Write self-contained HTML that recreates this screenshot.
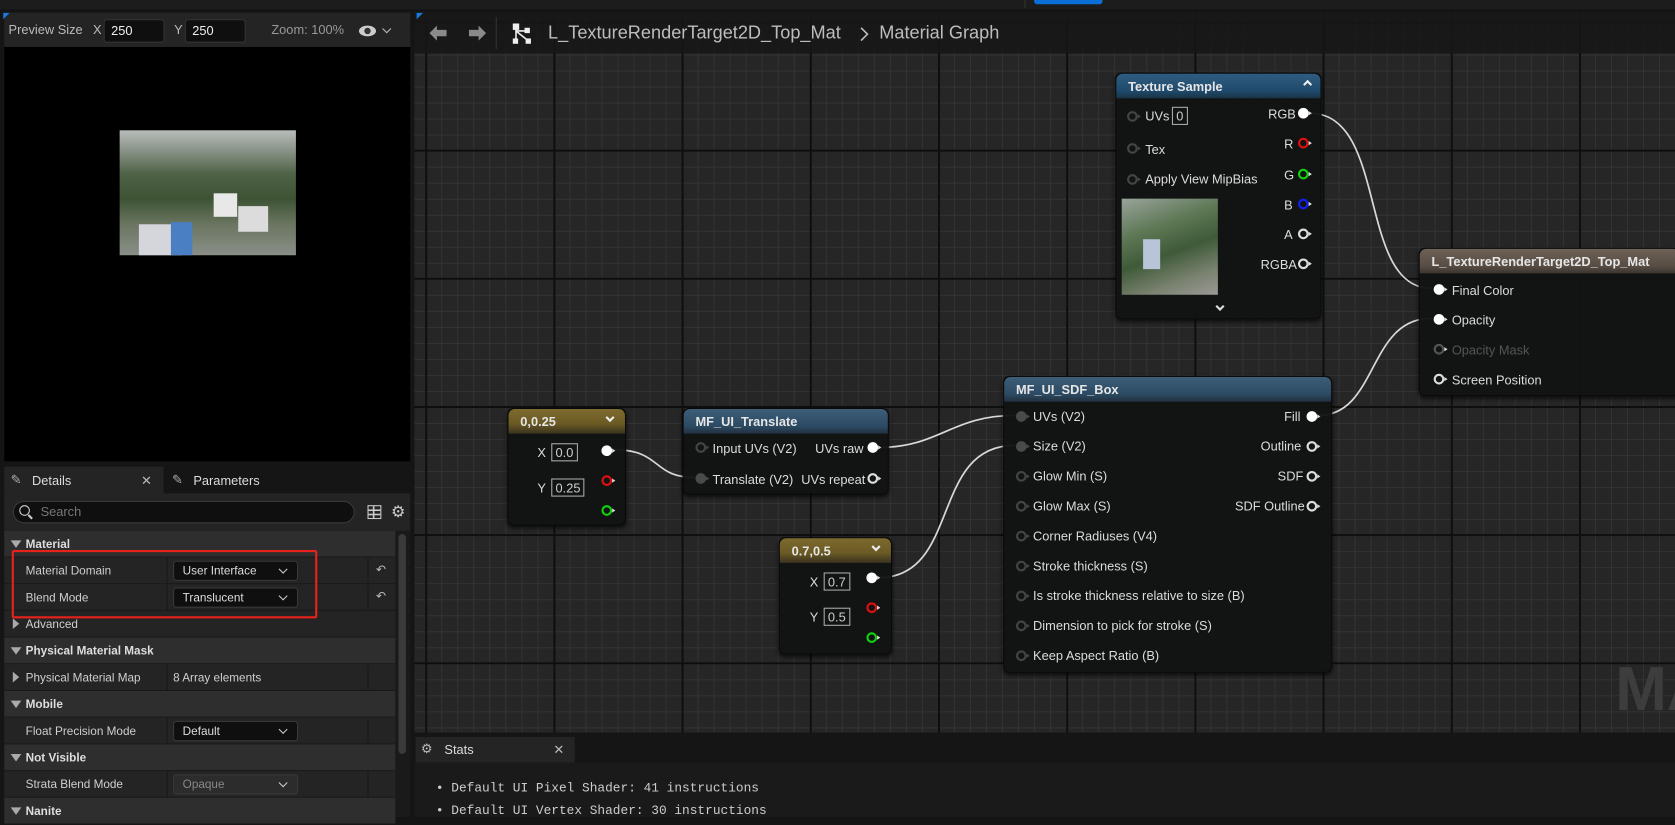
<!DOCTYPE html>
<html><head><meta charset="utf-8">
<style>
*{box-sizing:border-box;margin:0;padding:0}
html,body{width:1675px;height:817px;overflow:hidden;background:#151515}
#w{position:absolute;left:0;top:0;width:1568px;height:765px;transform:scale(1.0683,1.068);transform-origin:0 0;font-family:"Liberation Sans",sans-serif;color:#c8c8c8;font-size:12px}
.a{position:absolute}
.grid{left:388px;top:12px;width:1180px;height:674px;background-color:#262626;
background-image:
linear-gradient(90deg,#0e0e0e 2px,transparent 2px),
linear-gradient(0deg,#0e0e0e 2px,transparent 2px),
linear-gradient(90deg,#333 1px,transparent 1px),
linear-gradient(0deg,#333 1px,transparent 1px);
background-size:120px 120px,120px 120px,15px 15px,15px 15px;
background-position:10px 10px,10px 10px,10px 10px,10px 10px;overflow:hidden}
.node{position:absolute;background:rgba(18,20,19,.96);border-radius:6px;box-shadow:0 2px 4px rgba(0,0,0,.7);border:1px solid #0a0a0a}
.hd{height:23px;border-radius:6px 6px 0 0;color:#e6e6e6;font-weight:bold;font-size:12px;padding:5px 11px}
.hy{background:linear-gradient(180deg,#7d6a2e 0%,#6b5a24 60%,#3a3320 100%)}
.hb{background:linear-gradient(180deg,#3d5d78 0%,#2c4a63 70%,#223040 100%)}
.hr{background:linear-gradient(180deg,#6e6257 0%,#584d44 70%,#3b3530 100%)}
.t{position:absolute;color:#dcdcdc;font-size:12px;white-space:nowrap}
.pin{position:absolute;width:10px;height:10px;border-radius:50%;border:2px solid #ddd}
.pin:after{content:"";position:absolute;right:-5px;top:1px;width:0;height:0;border-top:2px solid transparent;border-bottom:2px solid transparent;border-left:3px solid #ddd}
.pin.f{background:#fff;border-color:#fff}
.pin.g{border-color:#444}
.pin.g:after{border-left-color:#444}
.pin.gf{background:#4a4a4a;border-color:#4a4a4a}
.pin.gf:after{border-left-color:#4a4a4a}
.box{position:absolute;border:1px solid #aaa;color:#ccc;font-size:12px;padding:1px 3px;height:17px;line-height:14px}
.row{position:absolute;left:4px;width:366px;height:25px;border-bottom:1px solid #1a1a1a}
.cat{background:#2e2e2e;color:#dedede;font-weight:bold;font-size:11px}
.prop{background:#242424;font-size:11px;color:#cfcfcf}
.dd{position:absolute;left:158px;top:3px;width:117px;height:19px;background:#0f0f0f;border-radius:3px;border:1px solid #383838;color:#ddd;font-size:11px;padding:3px 8px}
.dd:after{content:"";position:absolute;right:10px;top:4px;width:5px;height:5px;border-right:1.5px solid #ccc;border-bottom:1.5px solid #ccc;transform:rotate(45deg)}
.tri{position:absolute;left:6px;top:9px;width:0;height:0;border-left:5px solid transparent;border-right:5px solid transparent;border-top:7px solid #aaa}
.trr{position:absolute;left:8px;top:7px;width:0;height:0;border-top:5px solid transparent;border-bottom:5px solid transparent;border-left:6px solid #aaa}
</style></head><body><div id="w">
<div class="a" style="left:0;top:0;width:1568px;height:10px;background:#1c1c1c;border-bottom:1px solid #101010"></div>
<div class="a" style="left:968px;top:0;width:64px;height:4px;background:#0b6fd8;border-radius:0 0 3px 3px"></div>
<div class="a" style="left:959px;top:0;width:1px;height:8px;background:#333"></div>

<div class="a" style="left:0;top:10px;width:387px;height:755px;background:#151515"></div>
<div class="a" style="left:4px;top:12px;width:380px;height:32px;background:#242424"></div>
<div class="a" style="left:3px;top:12px;width:0;height:0;border-top:6px solid #1a7ae0;border-right:6px solid transparent"></div>
<div class="t" style="left:8px;top:21px;color:#bbb">Preview Size</div>
<div class="t" style="left:87px;top:21px;color:#bbb">X</div>
<div class="a" style="left:97px;top:18px;width:57px;height:22px;background:#0f0f0f;border:1px solid #333;border-radius:3px;color:#eee;padding:3px 6px">250</div>
<div class="t" style="left:163px;top:21px;color:#bbb">Y</div>
<div class="a" style="left:173px;top:18px;width:57px;height:22px;background:#0f0f0f;border:1px solid #333;border-radius:3px;color:#eee;padding:3px 6px">250</div>
<div class="t" style="left:254px;top:21px;color:#999">Zoom: 100%</div>
<div class="a" style="left:336px;top:24px;width:16px;height:10px;border-radius:50%;background:#ccc"></div>
<div class="a" style="left:341px;top:26px;width:6px;height:6px;border-radius:50%;background:#333"></div>
<div class="a" style="left:359px;top:24px;width:6px;height:6px;border-right:1.5px solid #bbb;border-bottom:1.5px solid #bbb;transform:rotate(45deg)"></div>
<div class="a" style="left:4px;top:44px;width:380px;height:388px;background:#000"></div>
<div class="a" style="left:112px;top:122px;width:165px;height:117px;background:linear-gradient(180deg,#b8bcb9 0%,#8d968c 15%,#4e6245 35%,#3d5334 55%,#6a7560 75%,#8a8f88 100%)"></div>
<div class="a" style="left:200px;top:181px;width:22px;height:22px;background:#e8e8e8"></div>
<div class="a" style="left:223px;top:193px;width:28px;height:24px;background:#dcdcdc"></div>
<div class="a" style="left:130px;top:210px;width:40px;height:29px;background:#d5d5dc"></div>
<div class="a" style="left:160px;top:208px;width:20px;height:31px;background:#4a7fc4"></div>

<div class="a" style="left:4px;top:437px;width:149px;height:25px;background:#242424"></div>
<div class="t" style="left:10px;top:442px;color:#aaa">✎</div>
<div class="t" style="left:30px;top:443px">Details</div>
<div class="t" style="left:132px;top:443px;color:#bbb">✕</div>
<div class="t" style="left:161px;top:442px;color:#aaa">✎</div>
<div class="t" style="left:181px;top:443px">Parameters</div>
<div class="a" style="left:4px;top:462px;width:380px;height:35px;background:#242424"></div>
<div class="a" style="left:12px;top:469px;width:320px;height:21px;background:#0f0f0f;border:1px solid #383838;border-radius:11px"></div>
<div class="a" style="left:18px;top:473px;width:10px;height:10px;border:1.5px solid #ccc;border-radius:50%"></div>
<div class="a" style="left:26px;top:483px;width:5px;height:1.5px;background:#ccc;transform:rotate(45deg)"></div>
<div class="t" style="left:38px;top:472px;color:#777">Search</div>
<div class="a" style="left:344px;top:473px;width:13px;height:13px;border:1.5px solid #ccc;background:linear-gradient(#ccc,#ccc) 0 3px/100% 1.5px no-repeat,linear-gradient(#ccc,#ccc) 0 7px/100% 1.5px no-repeat,linear-gradient(#ccc,#ccc) 4px 0/1.5px 100% no-repeat"></div>
<div class="t" style="left:366px;top:470px;color:#ccc;font-size:15px">⚙</div>
<div class="a" style="left:4px;top:497px;width:380px;height:268px;background:#1a1a1a"></div>

<div class="row cat" style="top:497px"><div class="tri"></div><span class="a" style="left:20px;top:7px">Material</span></div>
<div class="row prop" style="top:522px"><span class="a" style="left:20px;top:7px">Material Domain</span><div class="a" style="left:152px;top:0;width:1px;height:25px;background:#1a1a1a"></div><div class="dd">User Interface</div><div class="a" style="left:340px;top:0;width:1px;height:25px;background:#1a1a1a"></div><span class="a" style="left:348px;top:5px;color:#bbb">↶</span></div>
<div class="row prop" style="top:547px"><span class="a" style="left:20px;top:7px">Blend Mode</span><div class="a" style="left:152px;top:0;width:1px;height:25px;background:#1a1a1a"></div><div class="dd">Translucent</div><div class="a" style="left:340px;top:0;width:1px;height:25px;background:#1a1a1a"></div><span class="a" style="left:348px;top:5px;color:#bbb">↶</span></div>
<div class="row prop" style="top:572px"><div class="trr"></div><span class="a" style="left:20px;top:7px">Advanced</span></div>
<div class="row cat" style="top:597px"><div class="tri"></div><span class="a" style="left:20px;top:7px">Physical Material Mask</span></div>
<div class="row prop" style="top:622px"><div class="trr"></div><span class="a" style="left:20px;top:7px">Physical Material Map</span><div class="a" style="left:152px;top:0;width:1px;height:25px;background:#1a1a1a"></div><span class="a" style="left:158px;top:7px">8 Array elements</span><div class="a" style="left:340px;top:0;width:1px;height:25px;background:#1a1a1a"></div></div>
<div class="row cat" style="top:647px"><div class="tri"></div><span class="a" style="left:20px;top:7px">Mobile</span></div>
<div class="row prop" style="top:672px"><span class="a" style="left:20px;top:7px">Float Precision Mode</span><div class="a" style="left:152px;top:0;width:1px;height:25px;background:#1a1a1a"></div><div class="dd">Default</div><div class="a" style="left:340px;top:0;width:1px;height:25px;background:#1a1a1a"></div></div>
<div class="row cat" style="top:697px"><div class="tri"></div><span class="a" style="left:20px;top:7px">Not Visible</span></div>
<div class="row prop" style="top:722px"><span class="a" style="left:20px;top:7px">Strata Blend Mode</span><div class="a" style="left:152px;top:0;width:1px;height:25px;background:#1a1a1a"></div><div class="dd" style="background:#2c2c2c;color:#888">Opaque</div><div class="a" style="left:340px;top:0;width:1px;height:25px;background:#1a1a1a"></div></div>
<div class="row cat" style="top:747px"><div class="tri"></div><span class="a" style="left:20px;top:7px">Nanite</span></div>
<div class="a" style="left:373px;top:500px;width:7px;height:206px;background:#3a3a3a;border-radius:4px"></div>
<div class="a" style="left:11px;top:515px;width:286px;height:64px;border:2px solid #e8221b;border-radius:2px"></div>

<div class="a grid">
<div class="a" style="left:1124px;top:600px;font-size:58px;font-weight:bold;color:#3d3d3d">MA</div>
</div>
<div class="a" style="left:388px;top:12px;width:1180px;height:38px;background:rgba(22,22,22,.85)"></div>
<div class="a" style="left:390px;top:12px;width:0;height:0;border-top:6px solid #1a7ae0;border-right:6px solid transparent"></div>
<svg class="a" style="left:400px;top:22px" width="60" height="18" viewBox="0 0 60 18">
<path d="M2 9L9 2V6H18V12H9V16Z" fill="#8a8a8a"/>
<path d="M55 9L48 2V6H39V12H48V16Z" fill="#8a8a8a"/>
</svg>
<div class="a" style="left:464px;top:16px;width:1px;height:30px;background:#333"></div>
<svg class="a" style="left:478px;top:21px" width="22" height="22" viewBox="0 0 22 22"><rect x="2" y="1" width="6" height="6" fill="#eee"/><rect x="13" y="5" width="5" height="5" fill="#eee"/><rect x="2" y="15" width="5" height="5" fill="#eee"/><rect x="14" y="15" width="5" height="5" fill="#eee"/><path d="M5 6V16M5 8H14M5 8L15 16" stroke="#eee" stroke-width="1.5" fill="none"/></svg>
<div class="t" style="left:513px;top:21px;font-size:17px;color:#bdbdbd">L_TextureRenderTarget2D_Top_Mat</div>
<svg class="a" style="left:804px;top:24px" width="10" height="16"><path d="M2 2L8 8L2 14" stroke="#bdbdbd" stroke-width="1.5" fill="none"/></svg>
<div class="t" style="left:823px;top:21px;font-size:17px;color:#bdbdbd">Material Graph</div>

<svg class="a" style="left:0;top:0" width="1568" height="765">
<g stroke="#d8d8d8" stroke-width="1.6" fill="none">
<path d="M1226 106 C1300 106,1270 270,1340 270"/>
<path d="M1234 389 C1290 389,1280 298,1340 298"/>
<path d="M822 419 C880 419,890 389,950 389"/>
<path d="M574 421 C620 421,610 447,650 447"/>
<path d="M822 541 C900 541,870 417,950 417"/>
</g></svg>

<div class="node" style="left:475px;top:382px;width:111px;height:110px">
<div class="hd hy">0,0.25</div>
<div class="a" style="left:92px;top:5px;width:6px;height:6px;border-right:2px solid #eee;border-bottom:2px solid #eee;transform:rotate(45deg)"></div>
<span class="t" style="left:27px;top:34px">X</span><div class="box" style="left:40px;top:32px">0.0</div>
<span class="t" style="left:27px;top:67px">Y</span><div class="box" style="left:40px;top:65px">0.25</div>
<div class="pin f" style="left:87px;top:34px"></div>
<div class="pin" style="left:87px;top:62px;border-color:#e01010"></div>
<div class="pin" style="left:87px;top:90px;border-color:#10d010"></div>
</div>
<div class="node" style="left:639px;top:382px;width:193px;height:81px">
<div class="hd hb">MF_UI_Translate</div>
<div class="pin g" style="left:11px;top:31px"></div><span class="t" style="left:27px;top:30px">Input UVs (V2)</span>
<div class="pin gf" style="left:11px;top:60px"></div><span class="t" style="left:27px;top:59px">Translate (V2)</span>
<span class="t" style="left:123px;top:30px">UVs raw</span><div class="pin f" style="left:172px;top:31px"></div>
<span class="t" style="left:110px;top:59px">UVs repeat</span><div class="pin" style="left:172px;top:60px"></div>
</div>
<div class="node" style="left:729px;top:503px;width:106px;height:110px">
<div class="hd hy">0.7,0.5</div>
<div class="a" style="left:87px;top:5px;width:6px;height:6px;border-right:2px solid #eee;border-bottom:2px solid #eee;transform:rotate(45deg)"></div>
<span class="t" style="left:28px;top:34px">X</span><div class="box" style="left:41px;top:32px">0.7</div>
<span class="t" style="left:28px;top:67px">Y</span><div class="box" style="left:41px;top:65px">0.5</div>
<div class="pin f" style="left:81px;top:32px"></div>
<div class="pin" style="left:81px;top:60px;border-color:#e01010"></div>
<div class="pin" style="left:81px;top:88px;border-color:#10d010"></div>
</div>
<div class="node" style="left:1044px;top:68px;width:193px;height:231px">
<div class="hd hb" style="background:linear-gradient(180deg,#2f5c80 0%,#1f4a6c 70%,#1a3345 100%)">Texture Sample</div>
<div class="a" style="left:176px;top:7px;width:6px;height:6px;border-left:2px solid #eee;border-top:2px solid #eee;transform:rotate(45deg)"></div>
<div class="pin g" style="left:10px;top:35px"></div><span class="t" style="left:27px;top:33px">UVs</span><div class="box" style="left:52px;top:31px">0</div>
<div class="pin g" style="left:10px;top:65px"></div><span class="t" style="left:27px;top:64px">Tex</span>
<div class="pin g" style="left:10px;top:94px"></div><span class="t" style="left:27px;top:92px">Apply View MipBias</span>
<div class="a" style="left:5px;top:117px;width:90px;height:90px;background:linear-gradient(160deg,#9aa39c 0%,#607a58 30%,#3f5a38 55%,#7a8270 80%,#9a9a96 100%)"></div>
<div class="a" style="left:25px;top:155px;width:16px;height:28px;background:#b8c4d8"></div>
<span class="t" style="left:142px;top:31px">RGB</span><div class="pin f" style="left:170px;top:32px"></div>
<span class="t" style="left:157px;top:59px">R</span><div class="pin" style="left:170px;top:60px;border-color:#e01010"></div>
<span class="t" style="left:157px;top:88px">G</span><div class="pin" style="left:170px;top:89px;border-color:#10d010"></div>
<span class="t" style="left:157px;top:116px">B</span><div class="pin" style="left:170px;top:117px;border-color:#1020f0"></div>
<span class="t" style="left:157px;top:144px">A</span><div class="pin" style="left:170px;top:145px"></div>
<span class="t" style="left:135px;top:172px">RGBA</span><div class="pin" style="left:170px;top:173px"></div>
<div class="a" style="left:94px;top:215px;width:6px;height:6px;border-right:2px solid #ddd;border-bottom:2px solid #ddd;transform:rotate(45deg)"></div>
</div>
<div class="node" style="left:1328px;top:232px;width:245px;height:139px">
<div class="hd hr">L_TextureRenderTarget2D_Top_Mat</div>
<div class="pin f" style="left:13px;top:33px"></div><span class="t" style="left:30px;top:32px">Final Color</span>
<div class="pin f" style="left:13px;top:61px"></div><span class="t" style="left:30px;top:60px">Opacity</span>
<div class="pin" style="left:13px;top:89px;border-color:#555"></div><span class="t" style="left:30px;top:88px;color:#555">Opacity Mask</span>
<div class="pin" style="left:13px;top:117px"></div><span class="t" style="left:30px;top:116px">Screen Position</span>
</div>
<div class="node" style="left:939px;top:352px;width:308px;height:278px">
<div class="hd hb" style="padding-left:11px">MF_UI_SDF_Box</div>
<div class="pin gf" style="left:11px;top:32px"></div><span class="t" style="left:27px;top:30px">UVs (V2)</span>
<div class="pin gf" style="left:11px;top:60px"></div><span class="t" style="left:27px;top:58px">Size (V2)</span>
<div class="pin g" style="left:11px;top:88px"></div><span class="t" style="left:27px;top:86px">Glow Min (S)</span>
<div class="pin g" style="left:11px;top:116px"></div><span class="t" style="left:27px;top:114px">Glow Max (S)</span>
<div class="pin g" style="left:11px;top:144px"></div><span class="t" style="left:27px;top:142px">Corner Radiuses (V4)</span>
<div class="pin g" style="left:11px;top:172px"></div><span class="t" style="left:27px;top:170px">Stroke thickness (S)</span>
<div class="pin g" style="left:11px;top:200px"></div><span class="t" style="left:27px;top:198px">Is stroke thickness relative to size (B)</span>
<div class="pin g" style="left:11px;top:228px"></div><span class="t" style="left:27px;top:226px">Dimension to pick for stroke (S)</span>
<div class="pin g" style="left:11px;top:256px"></div><span class="t" style="left:27px;top:254px">Keep Aspect Ratio (B)</span>
<span class="t" style="left:262px;top:30px">Fill</span><div class="pin f" style="left:283px;top:32px"></div>
<span class="t" style="left:240px;top:58px">Outline</span><div class="pin" style="left:283px;top:60px"></div>
<span class="t" style="left:256px;top:86px">SDF</span><div class="pin" style="left:283px;top:88px"></div>
<span class="t" style="left:216px;top:114px">SDF Outline</span><div class="pin" style="left:283px;top:116px"></div>
</div>

<div class="a" style="left:388px;top:686px;width:1180px;height:79px;background:#151515"></div>
<div class="a" style="left:389px;top:690px;width:149px;height:24px;background:#242424"></div>
<div class="t" style="left:394px;top:694px;color:#bbb">⚙</div>
<div class="t" style="left:416px;top:695px">Stats</div>
<div class="t" style="left:518px;top:695px;color:#bbb">✕</div>
<div class="a" style="left:388px;top:714px;width:1180px;height:51px;background:#1a1a1a"></div>
<div class="t" style="left:408px;top:731px;font-family:'Liberation Mono',monospace;font-size:12px;color:#ccc">• Default UI Pixel Shader: 41 instructions</div>
<div class="t" style="left:408px;top:752px;font-family:'Liberation Mono',monospace;font-size:12px;color:#ccc">• Default UI Vertex Shader: 30 instructions</div>
</div></body></html>
